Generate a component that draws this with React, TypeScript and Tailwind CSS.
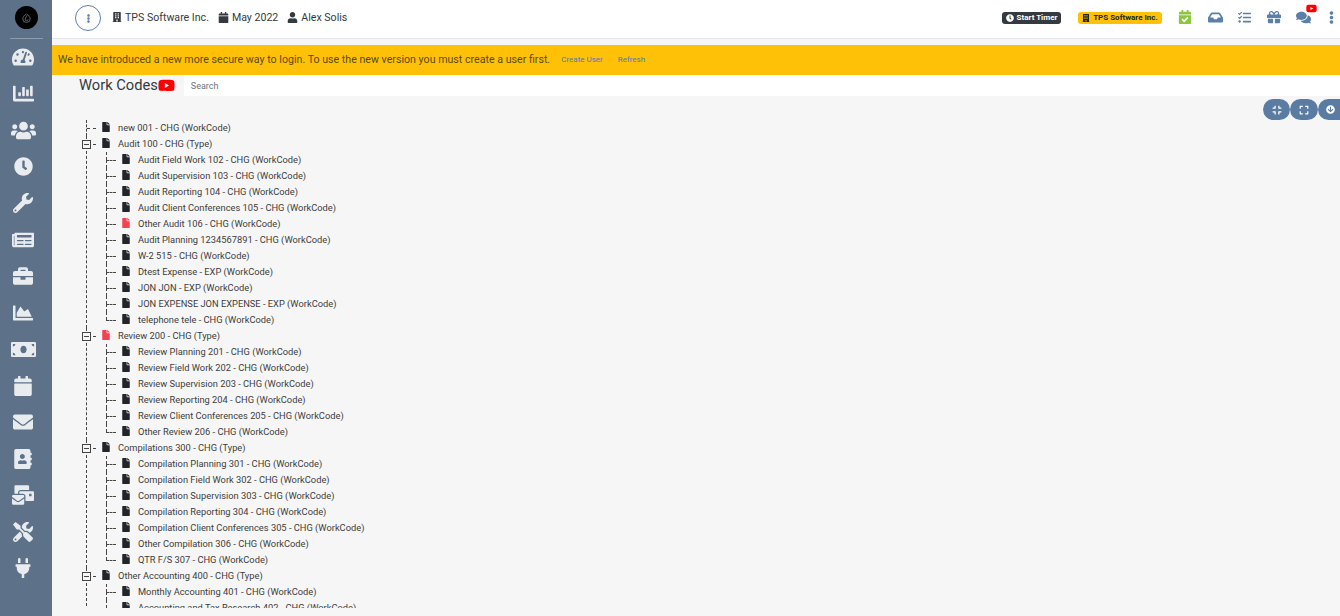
import {
  FaAddressBook,
  FaArrowCircleDown,
  FaBriefcase,
  FaBuilding,
  FaCalendar,
  FaCalendarCheck,
  FaChartArea,
  FaChartBar,
  FaClock,
  FaComments,
  FaCompress,
  FaEllipsisV,
  FaEnvelope,
  FaExpand,
  FaFile,
  FaGift,
  FaInbox,
  FaMailBulk,
  FaMoneyBill,
  FaNewspaper,
  FaPlug,
  FaTachometerAlt,
  FaTasks,
  FaTools,
  FaUser,
  FaUsers,
  FaWrench,
  FaYoutube,
} from "react-icons/fa";

const sideIcons = [
  { Icon: FaTachometerAlt, size: 22 },
  { Icon: FaChartBar, size: 21 },
  { Icon: FaUsers, size: 25 },
  { Icon: FaClock, size: 19 },
  { Icon: FaWrench, size: 20 },
  { Icon: FaNewspaper, size: 22 },
  { Icon: FaBriefcase, size: 20 },
  { Icon: FaChartArea, size: 20 },
  { Icon: FaMoneyBill, size: 25 },
  { Icon: FaCalendar, size: 20 },
  { Icon: FaEnvelope, size: 20 },
  { Icon: FaAddressBook, size: 20 },
  { Icon: FaMailBulk, size: 22 },
  { Icon: FaTools, size: 20 },
  { Icon: FaPlug, size: 20 },
];

type Code = { label: string; red?: boolean };
type Group = Code & { children?: Code[] };

const tree: Group[] = [
  { label: "new 001 - CHG (WorkCode)" },
  {
    label: "Audit 100 - CHG (Type)",
    children: [
      { label: "Audit Field Work 102 - CHG (WorkCode)" },
      { label: "Audit Supervision 103 - CHG (WorkCode)" },
      { label: "Audit Reporting 104 - CHG (WorkCode)" },
      { label: "Audit Client Conferences 105 - CHG (WorkCode)" },
      { label: "Other Audit 106 - CHG (WorkCode)", red: true },
      { label: "Audit Planning 1234567891 - CHG (WorkCode)" },
      { label: "W-2 515 - CHG (WorkCode)" },
      { label: "Dtest Expense - EXP (WorkCode)" },
      { label: "JON JON - EXP (WorkCode)" },
      { label: "JON EXPENSE JON EXPENSE - EXP (WorkCode)" },
      { label: "telephone tele - CHG (WorkCode)" },
    ],
  },
  {
    label: "Review 200 - CHG (Type)",
    red: true,
    children: [
      { label: "Review Planning 201 - CHG (WorkCode)" },
      { label: "Review Field Work 202 - CHG (WorkCode)" },
      { label: "Review Supervision 203 - CHG (WorkCode)" },
      { label: "Review Reporting 204 - CHG (WorkCode)" },
      { label: "Review Client Conferences 205 - CHG (WorkCode)" },
      { label: "Other Review 206 - CHG (WorkCode)" },
    ],
  },
  {
    label: "Compilations 300 - CHG (Type)",
    children: [
      { label: "Compilation Planning 301 - CHG (WorkCode)" },
      { label: "Compilation Field Work 302 - CHG (WorkCode)" },
      { label: "Compilation Supervision 303 - CHG (WorkCode)" },
      { label: "Compilation Reporting 304 - CHG (WorkCode)" },
      { label: "Compilation Client Conferences 305 - CHG (WorkCode)" },
      { label: "Other Compilation 306 - CHG (WorkCode)" },
      { label: "QTR F/S 307 - CHG (WorkCode)" },
    ],
  },
  {
    label: "Other Accounting 400 - CHG (Type)",
    children: [
      { label: "Monthly Accounting 401 - CHG (WorkCode)" },
      { label: "Accounting and Tax Research 402 - CHG (WorkCode)" },
    ],
  },
];

function Label({ item }: { item: Code }) {
  return (
    <>
      <FaFile className={"ml-[5px] mt-[2px] shrink-0 " + (item.red ? "text-[#f44250]" : "text-[#212529]")} size={10} />
      <span className="ml-[7px] mt-[1px] whitespace-nowrap text-[9.3px] leading-[14px] text-[#3d3d3d]">{item.label}</span>
    </>
  );
}

export default function App() {
  return (
    <div className="flex h-[616px] w-[1340px] overflow-hidden bg-[#f6f6f6] font-['Roboto',sans-serif]">
      <aside className="flex w-[52px] shrink-0 flex-col items-center bg-[#5d7189]">
        <div className="mt-[6px] flex h-[23px] w-[23px] items-center justify-center rounded-full bg-black">
          <svg width="9" height="10" viewBox="0 0 9 10" fill="none" stroke="#8a8a8a" strokeWidth="0.7">
            <path d="M4.5 .8C2 2.5 .8 4 .8 6a3.7 3.4 0 0 0 7.4 0C8.2 4 6.5 3 5.5 1.5 5 3 3.2 4.5 3.2 6.3a1.4 1.5 0 0 0 2.8 0" />
          </svg>
        </div>
        <div className="mt-[9px] h-px w-[33px] bg-[#8c9bad]" />
        <div className="flex w-full flex-col pr-[6px]">
          {sideIcons.map(({ Icon, size }, i) => (
            <div key={i} className="flex h-[36.5px] items-center justify-center text-[#e9ecef]">
              <Icon size={size} />
            </div>
          ))}
        </div>
      </aside>

      <div className="flex min-w-0 flex-1 flex-col">
        <header className="flex h-[39px] shrink-0 items-center border-b border-[#e4e6e9] bg-white pb-[2px] pl-[23px] pr-[2px]">
          <div className="flex h-[26px] w-[26px] items-center justify-center rounded-full border border-[#5a7fa8] text-[#5a7fa8]">
            <FaEllipsisV size={9} />
          </div>
          <div className="mb-[1px] ml-[11px] flex items-center gap-[3px] text-[10.6px] text-[#343a40]">
            <FaBuilding size={10} />
            <span>TPS Software Inc.</span>
          </div>
          <div className="mb-[1px] ml-[9px] flex items-center gap-[3px] text-[10.6px] text-[#343a40]">
            <FaCalendar size={11} />
            <span>May 2022</span>
          </div>
          <div className="mb-[1px] ml-[9px] flex items-center gap-[3px] text-[10.6px] text-[#343a40]">
            <FaUser size={11} />
            <span>Alex Solis</span>
          </div>

          <div className="ml-auto flex items-center">
            <div className="flex h-[12px] w-[59px] items-center justify-center gap-[3px] rounded-[3px] bg-[#343a40] text-[8px] font-bold text-white">
              <FaClock size={8} />
              <span>Start Timer</span>
            </div>
            <div className="ml-[17px] flex h-[12px] w-[84px] items-center justify-center gap-[3px] rounded-[3px] bg-[#ffc107] text-[8px] font-bold text-[#212529]">
              <FaBuilding size={8} />
              <span>TPS Software Inc.</span>
            </div>
            <div className="mb-[2px] flex items-center">
              <FaCalendarCheck className="ml-[16px] text-[#8cc63f]" size={14} />
              <FaInbox className="ml-[16px] text-[#5a7fa8]" size={15} />
              <FaTasks className="ml-[15px] text-[#5a7fa8]" size={13} />
              <FaGift className="ml-[16px] text-[#5a7fa8]" size={14} />
              <div className="relative ml-[15px]">
                <FaComments className="text-[#5a7fa8]" size={15} />
                <FaYoutube className="absolute -right-[6px] -top-[7px] text-[#ff0000]" size={11} />
              </div>
              <FaEllipsisV className="ml-[14px] text-[#5a7fa8]" size={13} />
            </div>
          </div>
        </header>

        <div className="h-[6px] shrink-0" />

        <div className="flex h-[30px] shrink-0 items-center bg-[#ffc107] pl-[6px] text-[#5c4a0c]">
          <span className="text-[10.65px]">We have introduced a new more secure way to login. To use the new version you must create a user first.</span>
          <span className="ml-[11px] text-[8px] text-[#4f7ab8]">Create User</span>
          <span className="ml-[15px] text-[8px] text-[#4f7ab8]">Refresh</span>
        </div>

        <div className="flex h-[21px] shrink-0 items-center pl-[27px]">
          <span className="text-[14.7px] text-[#343a40]">Work Codes</span>
          <FaYoutube className="text-[#ff0000]" size={17} />
          <div className="ml-[9px] flex h-full flex-1 items-center bg-white pl-[7px] pt-[2px] text-[9px] text-[#6c757d]">Search</div>
        </div>

        <main className="relative h-[512px] shrink-0 overflow-hidden">
          <div className="absolute right-0 top-[3px] flex">
            <div className="flex h-[21px] w-[27px] items-center justify-center rounded-full bg-[#5a7ca3] text-white">
              <FaCompress size={10} />
            </div>
            <div className="flex h-[21px] w-[28px] items-center justify-center rounded-full bg-[#5a7ca3] text-white">
              <FaExpand size={10} />
            </div>
            <div className="flex h-[21px] w-[22px] items-center rounded-l-full bg-[#5a7ca3] pl-[8px] text-white">
              <FaArrowCircleDown size={9} />
            </div>
          </div>

          <ul className="ml-[34px] mt-[24px]">
            {tree.map((g) => (
              <li key={g.label} className="relative border-l border-dashed border-[#444]">
                <div className="flex h-4 items-start">
                  <div className="mt-2 w-[9px] border-t border-dashed border-[#444]" />
                  <Label item={g} />
                </div>
                {g.children && (
                  <>
                    <div className="absolute -left-[5px] top-[4px] flex h-[9px] w-[9px] items-center justify-center border border-[#444] bg-[#f6f6f6]">
                      <div className="h-px w-[5px] bg-[#444]" />
                    </div>
                    <ul className="ml-[19px]">
                      {g.children.map((c, i) => (
                        <li key={c.label} className="flex h-4 items-start">
                          <div className="flex w-[10px] flex-col">
                            <div className="h-2 border-l border-dashed border-[#444]" />
                            <div className={"h-2 border-t border-dashed border-[#444] " + (i === g.children!.length - 1 ? "" : "border-l")} />
                          </div>
                          <Label item={c} />
                        </li>
                      ))}
                    </ul>
                  </>
                )}
              </li>
            ))}
          </ul>
        </main>
        <div className="h-[8px] shrink-0" />
      </div>
    </div>
  );
}
